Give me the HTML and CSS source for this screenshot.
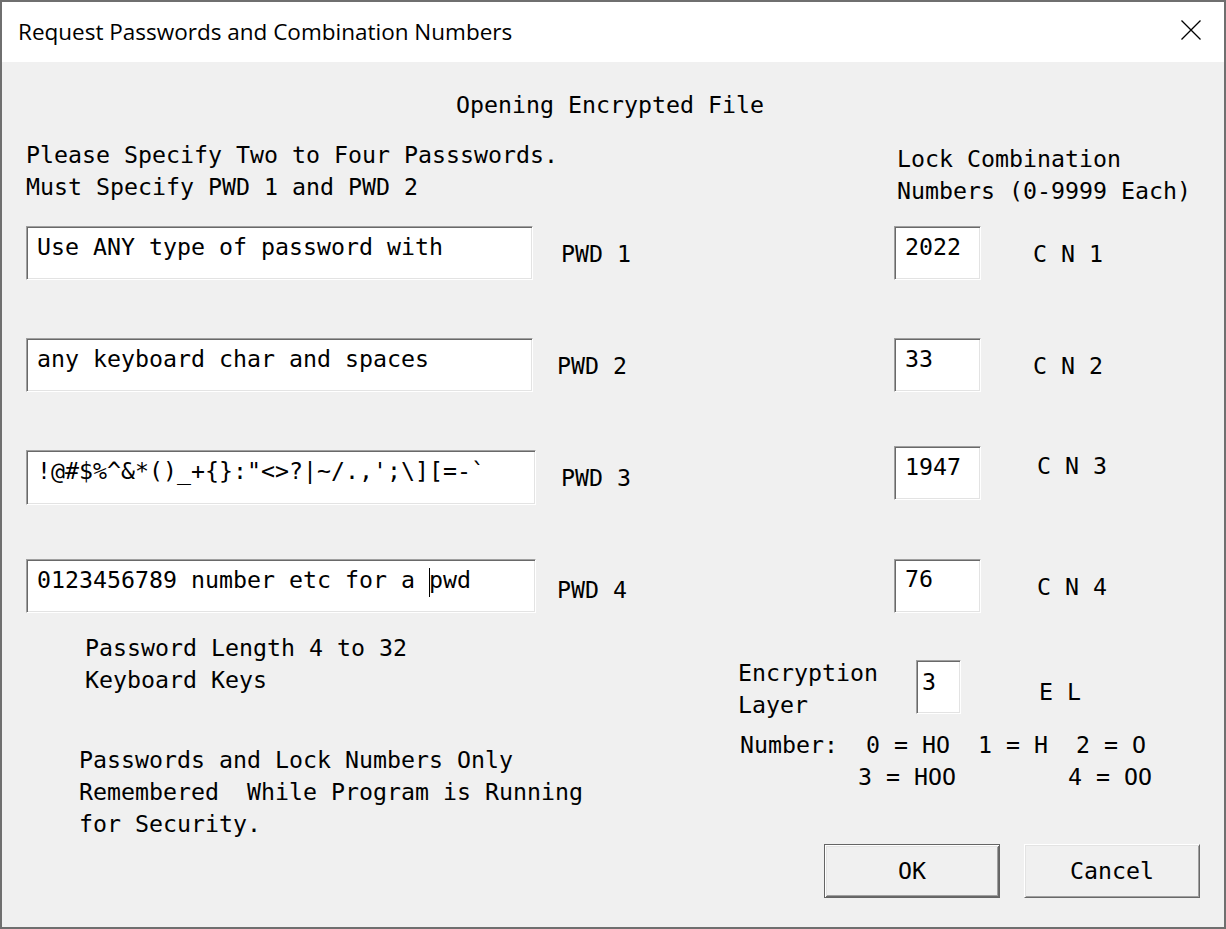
FILE: index.html
```html
<!DOCTYPE html>
<html>
<head>
<meta charset="utf-8">
<title>Request Passwords and Combination Numbers</title>
<link rel="stylesheet" href="styles.css">
</head>
<body>
<div class="window">
  <div class="titlebar">
    <span class="title">Request Passwords and Combination Numbers</span>
    <svg class="close" width="20" height="20" viewBox="0 0 20 20"><path d="M0.5 0.5L19.5 19.5M19.5 0.5L0.5 19.5" stroke="#000" stroke-width="1.3" fill="none"/></svg>
  </div>
  <div class="client">
    <div class="heading">Opening Encrypted File</div>
    <div class="header-row">
      <div class="pw-intro">Please Specify Two to Four Passswords.<br>Must Specify PWD 1 and PWD 2</div>
      <div class="cn-intro">Lock Combination<br>Numbers (0-9999 Each)</div>
    </div>

    <div class="field-row row1">
      <div class="pw-group">
        <div class="edit pw">Use ANY type of password with</div>
        <span class="lbl">PWD 1</span>
      </div>
      <div class="edit cn">2022</div>
      <span class="cn-lbl">C N 1</span>
    </div>

    <div class="field-row row2">
      <div class="pw-group">
        <div class="edit pw">any keyboard char and spaces</div>
        <span class="lbl">PWD 2</span>
      </div>
      <div class="edit cn">33</div>
      <span class="cn-lbl">C N 2</span>
    </div>

    <div class="field-row row3">
      <div class="pw-group">
        <div class="edit pw wide">!@#$%^&amp;*()_+{}:"&lt;&gt;?|~/.,';\][=-`</div>
        <span class="lbl">PWD 3</span>
      </div>
      <div class="edit cn">1947</div>
      <span class="cn-lbl">C N 3</span>
    </div>

    <div class="field-row row4">
      <div class="pw-group">
        <div class="edit pw wide">0123456789 number etc for a <span class="caret"></span>pwd</div>
        <span class="lbl">PWD 4</span>
      </div>
      <div class="edit cn">76</div>
      <span class="cn-lbl">C N 4</span>
    </div>

    <div class="bottom">
      <div class="notes">
        <div class="note note-length">Password Length 4 to 32<br>Keyboard Keys</div>
        <div class="note note-security">Passwords and Lock Numbers Only<br>Remembered  While Program is Running<br>for Security.</div>
      </div>
      <div class="side">
        <div class="enc-row">
          <div class="enc-label">Encryption<br>Layer</div>
          <div class="edit el">3</div>
          <span class="el-lbl">E L</span>
        </div>
        <div class="legend">
          <div class="legend-line legend-line1">Number:  0 = HO  1 = H  2 = O</div>
          <div class="legend-line legend-line2">3 = HOO        4 = OO</div>
        </div>
        <div class="buttons">
          <div class="btn btn-default">OK</div>
          <div class="btn btn-cancel">Cancel</div>
        </div>
      </div>
    </div>
  </div>
</div>
</body>
</html>
```
FILE: styles.css
```css
* {
  box-sizing: border-box;
}

html,
body {
  margin: 0;
  padding: 0;
}

body {
  width: 1226px;
  height: 929px;
  overflow: hidden;
  background: #ffffff;
}

.window {
  width: 1226px;
  height: 929px;
  border: 2px solid #6f6f6f;
  background: #f0f0f0;
  display: flex;
  flex-direction: column;
  overflow: hidden;
}

/* ---------- title bar ---------- */
.titlebar {
  height: 60px;
  flex: 0 0 60px;
  background: #ffffff;
  display: flex;
  align-items: flex-start;
}

.title {
  font-family: "Open Sans", "Noto Sans", sans-serif;
  font-size: 22.5px;
  line-height: 30px;
  color: #000000;
  margin-left: 16px;
  margin-top: 15px;
  white-space: pre;
}

.close {
  margin-left: auto;
  margin-right: 23px;
  margin-top: 18px;
  display: block;
}

/* ---------- client area ---------- */
.client {
  flex: 1 1 auto;
  font-family: "DejaVu Sans Mono", "Liberation Mono", monospace;
  font-size: 23.25px;
  line-height: 32px;
  color: #000000;
  display: flex;
  flex-direction: column;
}

.heading {
  margin-top: 27px;
  text-align: center;
  padding-right: 6px;
  white-space: pre;
}

.header-row {
  display: flex;
  margin-top: 18px;
}

.pw-intro {
  margin-left: 24px;
  width: 871px;
  white-space: pre;
}

.cn-intro {
  margin-top: 4px;
  white-space: pre;
}

/* ---------- field rows ---------- */
.field-row {
  display: flex;
  align-items: flex-start;
  height: 54px;
}

.row1 { margin-top: 19px; }
.row2 { margin-top: 58px; }
.row3 { margin-top: 54px; }
.row4 { margin-top: 59px; }

.pw-group {
  display: flex;
  align-items: flex-start;
  margin-left: 24px;
  width: 868px;
  flex: 0 0 868px;
}

.edit {
  background: #ffffff;
  height: 54px;
  border-style: solid;
  border-width: 1px;
  border-color: #a0a0a0 #ffffff #ffffff #a0a0a0;
  box-shadow: inset 1px 1px 0 #696969, inset -1px -1px 0 #e3e3e3;
  padding: 4px 0 0 10px;
  white-space: pre;
  overflow: hidden;
}

.pw {
  width: 507px;
  flex: 0 0 507px;
}

.pw.wide {
  width: 510px;
  flex: 0 0 510px;
}

.cn {
  width: 87px;
  flex: 0 0 87px;
  padding-left: 10px;
}

.lbl,
.cn-lbl,
.el-lbl {
  white-space: pre;
}

.row1 .lbl { margin-left: 28px; margin-top: 12px; }
.row2 .lbl { margin-left: 24px; margin-top: 12px; }
.row3 .lbl { margin-left: 25px; margin-top: 16px; }
.row4 .lbl { margin-left: 21px; margin-top: 15px; }

.row3 .pw { margin-top: 4px; height: 55px; }

.row1 .cn-lbl { margin-left: 52px; margin-top: 12px; }
.row2 .cn-lbl { margin-left: 52px; margin-top: 12px; }
.row3 .cn-lbl { margin-left: 56px; margin-top: 4px; }
.row4 .cn-lbl { margin-left: 56px; margin-top: 12px; }

.row4 .cn { padding-top: 3px; }

.caret {
  display: inline-block;
  width: 1.5px;
  height: 29px;
  background: #000000;
  vertical-align: -9px;
  margin-right: -1.5px;
}

/* ---------- bottom section ---------- */
.bottom {
  display: flex;
  align-items: flex-start;
}

.notes {
  width: 736px;
  flex: 0 0 736px;
  display: flex;
  flex-direction: column;
}

.note {
  white-space: pre;
}

.note-length {
  margin-top: 19px;
  margin-left: 83px;
}

.note-security {
  margin-top: 48px;
  margin-left: 77px;
}

.side {
  display: flex;
  flex-direction: column;
}

.enc-row {
  display: flex;
  align-items: flex-start;
  margin-top: 44px;
}

.enc-label {
  width: 178px;
  flex: 0 0 178px;
  white-space: pre;
}

.el {
  width: 45px;
  flex: 0 0 45px;
  margin-top: 3px;
  padding: 5px 0 0 5px;
}

.el-lbl {
  margin-left: 78px;
  margin-top: 19px;
}

.legend {
  margin-top: 8px;
  display: flex;
  flex-direction: column;
}

.legend-line {
  white-space: pre;
}

.legend-line1 {
  margin-left: 2px;
}

.legend-line2 {
  margin-left: 120px;
}

.buttons {
  display: flex;
  margin-top: 51px;
  margin-left: 86px;
  gap: 24px;
}

.btn {
  width: 176px;
  height: 54px;
  display: flex;
  align-items: center;
  justify-content: center;
  background: #f0f0f0;
  white-space: pre;
}

.btn-default {
  border: 1px solid #646464;
  box-shadow: inset 1px 1px 0 #ffffff, inset -1px -1px 0 #696969,
    inset 2px 2px 0 #e3e3e3, inset -2px -2px 0 #a0a0a0;
}

.btn-cancel {
  border-style: solid;
  border-width: 1px;
  border-color: #ffffff #696969 #696969 #ffffff;
  box-shadow: inset 1px 1px 0 #e3e3e3, inset -1px -1px 0 #a0a0a0;
}
```
